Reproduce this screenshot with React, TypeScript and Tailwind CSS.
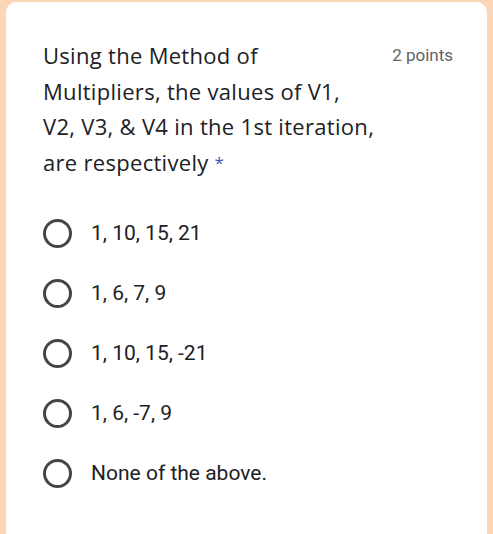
import React from 'react';

const options = ['1, 10, 15, 21', '1, 6, 7, 9', '1, 10, 15, -21', '1, 6, -7, 9', 'None of the above.'];

const App: React.FC = () => {
  return (
    <div className="w-[493px] h-[534px] bg-[#fcd7b6] px-[6px] pt-[2px] overflow-hidden" style={{ fontFamily: 'Roboto, "Noto Sans", sans-serif' }}>
      <div className="h-full bg-white rounded-t-[10px] pl-[37px] pr-[34px] pt-[36px]">
        <div className="flex justify-between items-start">
          <div className="text-[22px] leading-[35.5px] tracking-[0.3px] text-[#202124]" style={{ fontFamily: '"Open Sans", Roboto, sans-serif' }}>
            <div>Using the Method of</div>
            <div>Multipliers, the values of V1,</div>
            <div>V2, V3, &amp; V4 in the 1st iteration,</div>
            <div>
              are respectively <span className="text-[#3b55a8] text-[17px] align-top">*</span>
            </div>
          </div>
          <div className="text-[17px] text-[#5f6368] mt-[5px]">2 points</div>
        </div>
        <div className="mt-[39px] flex flex-col gap-[31px]">
          {options.map((o) => (
            <div key={o} className="flex items-center gap-[19px]">
              <div className="w-[29px] h-[29px] rounded-full border-[3px] border-[#454545] shrink-0" />
              <span className="text-[21px] leading-[29px] text-[#202124]">{o}</span>
            </div>
          ))}
        </div>
      </div>
    </div>
  );
};

export default App;
